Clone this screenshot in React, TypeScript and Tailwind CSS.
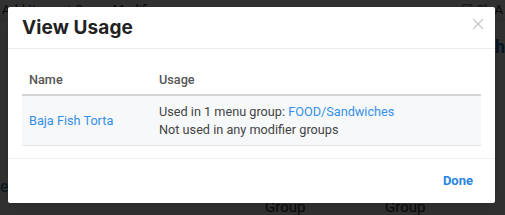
import React from "react";

export default function App() {
  return (
    <div
      className="relative w-[505px] h-[215px] overflow-hidden bg-[#f4f4f4]"
      style={{ fontFamily: "Roboto, 'Noto Sans', sans-serif" }}
    >
      {/* background page */}
      <div className="flex flex-col text-[13px] text-[#333]">
        <div className="flex items-center justify-between h-[20px] px-[2px] border-b border-[#ddd]">
          <span>Add Item &nbsp;✓ Save &nbsp; Modifier</span>
          <span>☐ Sh A</span>
        </div>
        <div className="flex justify-end h-[40px] items-end pr-0">
          <span className="text-[#2b6cb0] font-bold text-[18px]">Sh</span>
        </div>
        <div className="h-[120px]" />
        <div className="flex items-start gap-[120px] pl-[72px] h-[35px]">
          <span className="text-[16px]">1000000000070102000</span>
        </div>
      </div>
      <div className="absolute left-[265px] top-[200px] text-[15px] leading-[15px] text-[#333]">Group</div>
      <div className="absolute left-[385px] top-[200px] text-[15px] leading-[15px] text-[#333]">Group</div>
      <div className="absolute left-0 top-[175px] w-[8px] text-[16px] text-[#2b6cb0]">e</div>

      {/* overlay */}
      <div className="absolute inset-0 bg-[rgba(0,0,0,0.8)]" />

      {/* modal */}
      <div className="absolute left-[8px] top-[7px] w-[487px] h-[196px] bg-white rounded-[2px] flex flex-col shadow-lg">
        <div className="flex items-center justify-between h-[42px] border-b border-[#ececec] pl-[14px] pr-[11px]">
          <h2
            className="font-bold text-[#222] tracking-[0.1px] pt-[2px]"
            style={{ fontFamily: "Inter, 'Noto Sans', sans-serif", fontSize: "19px" }}
          >
            View Usage
          </h2>
          <svg width="12" height="12" viewBox="0 0 12 12" className="mt-[-8px]">
            <path d="M1 1L11 11M11 1L1 11" stroke="#c8c8c8" strokeWidth="1.2" />
          </svg>
        </div>
        <div className="px-[14px] pt-[17px] pb-[12px] border-b border-[#f0f0f0]">
          <div className="flex flex-col text-[12.7px]">
            <div className="flex h-[30px] items-center border-b-2 border-[#d4d4d4] font-medium text-[#555]">
              <div className="w-[130px] pl-[7px]">Name</div>
              <div className="pl-[7px]">Usage</div>
            </div>
            <div className="flex h-[50px] items-center bg-[#f7f8fa] border-b border-[#e6e6e6] text-[#444]">
              <div className="w-[130px] pl-[7px] text-[#3390e8]">Baja Fish Torta</div>
              <div className="pl-[7px] flex flex-col leading-[18px]">
                <span>
                  Used in 1 menu group: <span className="text-[#3390e8]">FOOD/Sandwiches</span>
                </span>
                <span>Not used in any modifier groups</span>
              </div>
            </div>
          </div>
        </div>
        <div className="flex-1 flex items-center justify-end pr-[22px]">
          <span className="text-[13px] font-bold text-[#2a85e0]">Done</span>
        </div>
      </div>
    </div>
  );
}
